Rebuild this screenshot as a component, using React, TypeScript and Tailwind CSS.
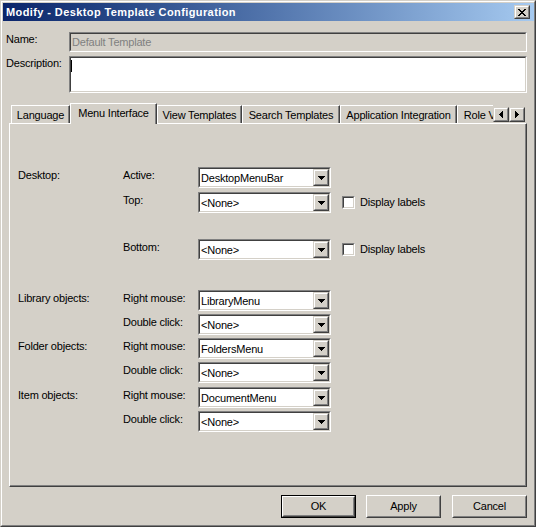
import React from "react";

const font = "font-['Liberation_Sans',Arial,sans-serif]";

function Sunken({ className = "", innerClassName = "", children }: { className?: string; innerClassName?: string; children?: React.ReactNode }) {
  return (
    <div className={`border border-t-[#808080] border-l-[#808080] border-r-white border-b-white ${className}`}>
      <div className={`h-full border border-t-[#404040] border-l-[#404040] border-r-[#D4D0C8] border-b-[#D4D0C8] ${innerClassName}`}>
        {children}
      </div>
    </div>
  );
}

function DownGlyph() {
  return (
    <svg width="7" height="4" viewBox="0 0 7 4" shapeRendering="crispEdges">
      <rect x="0" y="0" width="7" height="1" fill="#000" />
      <rect x="1" y="1" width="5" height="1" fill="#000" />
      <rect x="2" y="2" width="3" height="1" fill="#000" />
      <rect x="3" y="3" width="1" height="1" fill="#000" />
    </svg>
  );
}

function LeftGlyph() {
  return (
    <svg width="4" height="7" viewBox="0 0 4 7" shapeRendering="crispEdges">
      <rect x="0" y="3" width="1" height="1" fill="#000" />
      <rect x="1" y="2" width="1" height="3" fill="#000" />
      <rect x="2" y="1" width="1" height="5" fill="#000" />
      <rect x="3" y="0" width="1" height="7" fill="#000" />
    </svg>
  );
}

function RightGlyph() {
  return (
    <svg width="4" height="7" viewBox="0 0 4 7" shapeRendering="crispEdges">
      <rect x="0" y="0" width="1" height="7" fill="#000" />
      <rect x="1" y="1" width="1" height="5" fill="#000" />
      <rect x="2" y="2" width="1" height="3" fill="#000" />
      <rect x="3" y="3" width="1" height="1" fill="#000" />
    </svg>
  );
}

function CloseGlyph() {
  const rows = [
    [0, 2, 6, 2],
    [1, 2, 5, 2],
    [2, 4],
    [3, 2],
    [2, 4],
    [1, 2, 5, 2],
    [0, 2, 6, 2],
  ];
  return (
    <svg width="8" height="7" viewBox="0 0 8 7" shapeRendering="crispEdges">
      {rows.map((r, y) => (
        <g key={y}>
          <rect x={r[0]} y={y} width={r[1]} height="1" fill="#000" />
          {r.length > 2 && <rect x={r[2]} y={y} width={r[3]} height="1" fill="#000" />}
        </g>
      ))}
    </svg>
  );
}

function SmallRaised({ className = "", children }: { className?: string; children?: React.ReactNode }) {
  return (
    <div className={`border border-t-[#D4D0C8] border-l-[#D4D0C8] border-r-[#404040] border-b-[#404040] ${className}`}>
      <div className="h-full border border-t-white border-l-white border-r-[#808080] border-b-[#808080] bg-[#D4D0C8] flex items-center justify-center">
        {children}
      </div>
    </div>
  );
}

function Combo({ value }: { value: string }) {
  return (
    <Sunken className="w-[133px] h-[21px] shrink-0" innerClassName="bg-white flex">
      <div className="flex-1 pl-[1px] pt-[3px] leading-[13px] whitespace-nowrap overflow-hidden">{value}</div>
      <SmallRaised className="w-[16px] h-full">
        <DownGlyph />
      </SmallRaised>
    </Sunken>
  );
}

function CheckBox() {
  return <Sunken className="w-[13px] h-[13px] shrink-0" innerClassName="bg-white" />;
}

function PushButton({ label, isDefault = false, className = "" }: { label: string; isDefault?: boolean; className?: string }) {
  const core = (
    <div className="h-full border border-t-white border-l-white border-r-[#404040] border-b-[#404040]">
      <div className={`h-full border border-t-[#D4D0C8] border-l-[#D4D0C8] border-r-[#808080] border-b-[#808080] flex justify-center leading-[13px] ${isDefault ? "pt-[2px]" : "pt-[3px]"}`}>
        {label}
      </div>
    </div>
  );
  return (
    <div className={`w-[75px] h-[23px] ${isDefault ? "border border-black" : ""} ${className}`}>{core}</div>
  );
}

const tabs = [
  { label: "Language", w: "w-[59px]" },
  { label: "Menu Interface", w: "w-[87px]", active: true },
  { label: "View Templates", w: "w-[85px]" },
  { label: "Search Templates", w: "w-[98px]" },
  { label: "Application Integration", w: "w-[117px]" },
  { label: "Role View", w: "w-[61px]" },
];

type Row = { group?: string; label: string; value: string; mt: string; check?: boolean };

const rows: Row[] = [
  { group: "Desktop:", label: "Active:", value: "DesktopMenuBar", mt: "mt-0" },
  { label: "Top:", value: "<None>", mt: "mt-[4px]", check: true },
  { label: "Bottom:", value: "<None>", mt: "mt-[26px]", check: true },
  { group: "Library objects:", label: "Right mouse:", value: "LibraryMenu", mt: "mt-[30px]" },
  { label: "Double click:", value: "<None>", mt: "mt-[3px]" },
  { group: "Folder objects:", label: "Right mouse:", value: "FoldersMenu", mt: "mt-[3px]" },
  { label: "Double click:", value: "<None>", mt: "mt-[3px]" },
  { group: "Item objects:", label: "Right mouse:", value: "DocumentMenu", mt: "mt-[4px]" },
  { label: "Double click:", value: "<None>", mt: "mt-[3px]" },
];

export default function App() {
  return (
    <div className={`w-[536px] h-[527px] ${font} text-[11px] leading-[13px] tracking-[-0.2px] text-black bg-[#D4D0C8]`}>
      <div className="w-full h-full border border-t-[#D4D0C8] border-l-[#D4D0C8] border-r-[#404040] border-b-[#404040]">
        <div className="w-full h-full border border-t-white border-l-white border-r-[#808080] border-b-[#808080] pl-[1px] pt-[1px] flex flex-col">
          {/* Title bar */}
          <div className="h-[18px] shrink-0 flex items-center bg-gradient-to-r from-[#0A246A] to-[#A6CAF0] pl-[3px] pr-[4px]">
            <span className="flex-1 font-bold text-white whitespace-nowrap tracking-[0.4px]">Modify - Desktop Template Configuration</span>
            <SmallRaised className="w-[16px] h-[14px]">
              <CloseGlyph />
            </SmallRaised>
          </div>

          {/* Body */}
          <div className="flex-1 flex flex-col pl-[3px] pr-[7px]">
            {/* Name */}
            <div className="mt-[11px] h-[20px] flex">
              <div className="w-[63px] shrink-0 pt-[1px]">Name:</div>
              <Sunken className="flex-1 h-full" innerClassName="bg-[#D4D0C8] pl-[1px] pt-[2px] text-[#808080]">
                Default Template
              </Sunken>
            </div>

            {/* Description */}
            <div className="mt-[4px] h-[37px] flex">
              <div className="w-[63px] shrink-0 pt-[1px]">Description:</div>
              <Sunken className="flex-1 h-full" innerClassName="bg-white">
                <div className="w-px h-[12px] bg-black mt-[2px]" />
              </Sunken>
            </div>

            {/* Tab strip */}
            <div className="mt-[10px] ml-[3px] h-[20px] flex relative z-10">
              <div className="flex-1 min-w-0 flex items-end pl-[2px] overflow-x-clip">
                {tabs.map((t) => (
                  <div
                    key={t.label}
                    className={`${t.w} shrink-0 flex justify-center whitespace-nowrap border-t border-l border-r border-t-white border-l-white border-r-[#404040] shadow-[inset_-1px_0_0_#808080] bg-[#D4D0C8] pt-[3px] ${
                      t.active ? "h-[21px] -mb-px relative z-10" : "h-[18px]"
                    }`}
                  >
                    {t.label}
                  </div>
                ))}
              </div>
              <div className="flex shrink-0 mt-[4px] mr-[2px] self-start">
                <SmallRaised className="w-[16px] h-[15px]">
                  <LeftGlyph />
                </SmallRaised>
                <SmallRaised className="w-[16px] h-[15px]">
                  <RightGlyph />
                </SmallRaised>
              </div>
            </div>

            {/* Tab panel */}
            <div className="ml-[3px] h-[364px] border border-t-white border-l-white border-r-[#404040] border-b-[#404040]">
              <div className="h-full border-r border-b border-r-[#808080] border-b-[#808080] pt-[43px] pl-[8px] flex flex-col">
                {rows.map((r, i) => (
                  <div key={i} className={`${r.mt} h-[21px] flex`}>
                    <div className="w-[105px] shrink-0 whitespace-nowrap pt-[2px]">{r.group ?? ""}</div>
                    <div className="w-[75px] shrink-0 whitespace-nowrap pt-[2px]">{r.label}</div>
                    <Combo value={r.value} />
                    {r.check && (
                      <div className="ml-[11px] flex items-center gap-[5px]">
                        <CheckBox />
                        <span className="whitespace-nowrap">Display labels</span>
                      </div>
                    )}
                  </div>
                ))}
              </div>
            </div>

            {/* Buttons */}
            <div className="mt-[8px] flex justify-end">
              <PushButton label="OK" isDefault />
              <PushButton label="Apply" className="ml-[10px]" />
              <PushButton label="Cancel" className="ml-[11px]" />
            </div>
          </div>
        </div>
      </div>
    </div>
  );
}
